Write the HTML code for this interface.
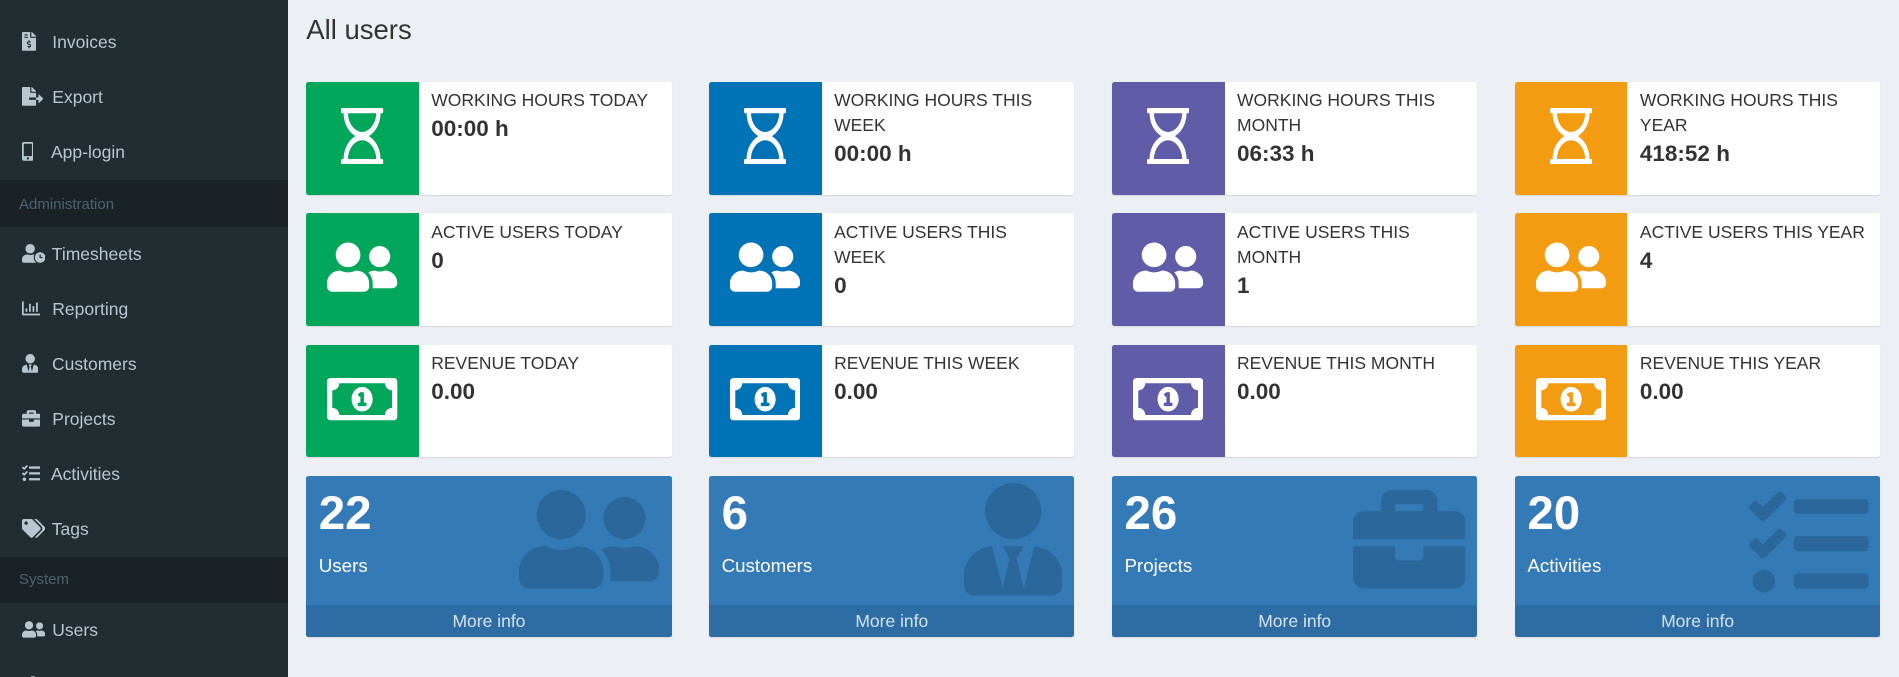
<!DOCTYPE html>
<html lang="en"><head><meta charset="utf-8"><title>All users</title>
<style>
*{box-sizing:border-box}
html,body{margin:0;padding:0;width:1899px;height:677px;overflow:hidden;background:#ecf0f5;font-family:"Liberation Sans",sans-serif;color:#333}
.side{position:absolute;left:0;top:0;width:287.5px;height:677px;background:#222d32;overflow:hidden}
.side svg{position:absolute;left:21.5px;height:18.75px;fill:#b8c7ce}
.side a{position:absolute;font-size:17.5px;line-height:25px;color:#b8c7ce;white-space:nowrap}
.hd{position:absolute;left:0;width:287.5px;background:#1a2226;color:#4b646f;font-size:15px;padding-left:19px;white-space:nowrap}
h1{position:absolute;left:306.25px;top:14.5px;margin:0;font-size:27.5px;line-height:30px;font-weight:400;color:#333}
.ib{position:absolute;width:365.4px;height:112.5px;background:#fff;border-radius:2.5px;box-shadow:0 1px 1px rgba(0,0,0,.1);overflow:hidden}
.ic{position:absolute;left:0;top:0;width:112.5px;height:112.5px}
.ic svg{position:absolute;top:26px;height:56.25px;fill:#fff}
.hg{left:35.2px;width:42.2px}.uf{left:21.1px;width:70.3px}
.ct{position:absolute;left:112.5px;top:0;right:0;padding:6.25px 12.5px}
.t{display:block;font-size:17.5px;line-height:25px;text-transform:uppercase}
.n{display:block;font-size:22.5px;line-height:32.1px;font-weight:700}
.g{background:#00a65a}.b{background:#0073b7}.p{background:#605ca8}.o{background:#f39c12}
.sb{position:absolute;top:475.75px;width:365.4px;height:161.25px;background:#337ab7;border-radius:2.5px;box-shadow:0 1px 1px rgba(0,0,0,.1);overflow:hidden;color:#fff}
.sb h3{position:absolute;left:12.5px;top:12.75px;margin:0;font-size:47.5px;line-height:50px;font-weight:700;white-space:nowrap}
.sb p{position:absolute;left:12.5px;top:77px;margin:0;font-size:18.75px;line-height:25px}
.sb svg{position:absolute;fill:rgba(0,0,0,.15)}
.ft{position:absolute;left:0;right:0;top:129.25px;height:32px;background:rgba(0,0,0,.1);padding-top:3.75px;text-align:center;font-size:17.5px;line-height:25px;color:rgba(255,255,255,.8)}
</style></head><body>
<div class="side">
<svg style="top:32px" viewBox="0 0 384 512"><path d="M377 105L279.1 7c-4.5-4.5-10.6-7-17-7H256v128h128v-6.1c0-6.3-2.5-12.4-7-16.9zm-153 31V0H24C10.7 0 0 10.7 0 24v464c0 13.3 10.7 24 24 24h336c13.3 0 24-10.7 24-24V160H248c-13.2 0-24-10.8-24-24zM64 72c0-4.42 3.58-8 8-8h80c4.42 0 8 3.58 8 8v16c0 4.42-3.58 8-8 8H72c-4.42 0-8-3.58-8-8V72zm0 80v-16c0-4.42 3.58-8 8-8h80c4.42 0 8 3.58 8 8v16c0 4.42-3.58 8-8 8H72c-4.42 0-8-3.58-8-8zm144 263.88V440c0 4.42-3.58 8-8 8h-16c-4.42 0-8-3.58-8-8v-24.29c-11.29-.58-22.27-4.52-31.37-11.35-3.9-2.93-4.1-8.77-.57-12.14l11.75-11.21c2.77-2.64 6.89-2.76 10.13-.73 3.87 2.42 8.26 3.72 12.82 3.72h28.11c6.5 0 11.8-5.92 11.8-13.19 0-5.95-3.61-11.19-8.77-12.73l-45-13.5c-18.59-5.58-31.58-23.42-31.58-43.39 0-24.52 19.05-44.44 42.67-45.07V232c0-4.42 3.58-8 8-8h16c4.42 0 8 3.58 8 8v24.29c11.29.58 22.27 4.51 31.37 11.35 3.9 2.93 4.1 8.77.57 12.14l-11.75 11.21c-2.77 2.64-6.89 2.76-10.13.73-3.87-2.43-8.26-3.72-12.82-3.72h-28.11c-6.5 0-11.8 5.92-11.8 13.19 0 5.95 3.61 11.19 8.77 12.73l45 13.5c18.59 5.58 31.58 23.42 31.58 43.39 0 24.53-19.05 44.44-42.67 45.07z"/></svg>
<a style="left:52.3px;top:29.5px">Invoices</a>
<svg style="top:87px" viewBox="0 0 576 512"><path d="M384 121.9c0-6.3-2.5-12.4-7-16.9L279.1 7c-4.5-4.5-10.6-7-17-7H256v128h128zM571 308l-95.7-96.4c-10.1-10.1-27.4-3-27.4 11.3V288h-64v64h64v65.2c0 14.3 17.3 21.4 27.4 11.3L571 332c6.6-6.6 6.6-17.4 0-24zm-379 28v-32c0-8.8 7.2-16 16-16h176V160H248c-13.2 0-24-10.8-24-24V0H24C10.7 0 0 10.7 0 24v464c0 13.3 10.7 24 24 24h336c13.3 0 24-10.7 24-24V352H208c-8.8 0-16-7.2-16-16z"/></svg>
<a style="left:52.3px;top:84.5px">Export</a>
<svg style="top:142px" viewBox="0 0 320 512"><path d="M272 0H48C21.5 0 0 21.5 0 48v416c0 26.5 21.5 48 48 48h224c26.5 0 48-21.5 48-48V48c0-26.5-21.5-48-48-48zM160 480c-17.7 0-32-14.3-32-32s14.3-32 32-32 32 14.3 32 32-14.3 32-32 32zm112-108c0 6.6-5.4 12-12 12H60c-6.6 0-12-5.4-12-12V60c0-6.6 5.4-12 12-12h200c6.6 0 12 5.4 12 12v312z"/></svg>
<a style="left:51px;top:139.5px">App-login</a>
<div class="hd" style="top:180px;height:47px;line-height:47px;padding-top:.5px">Administration</div>
<svg style="top:244px" viewBox="0 0 640 512"><path d="M496 224c-79.6 0-144 64.4-144 144s64.4 144 144 144 144-64.4 144-144-64.4-144-144-144zm64 150.3c0 5.3-4.4 9.7-9.7 9.7h-60.6c-5.3 0-9.7-4.4-9.7-9.7v-76.6c0-5.3 4.4-9.7 9.7-9.7h12.6c5.3 0 9.7 4.4 9.7 9.7V352h38.3c5.3 0 9.7 4.4 9.7 9.7v12.6zM320 368c0-27.8 6.7-54.1 18.2-77.5-8-1.5-16.2-2.5-24.6-2.5h-16.7c-22.2 10.2-46.9 16-72.9 16s-50.6-5.8-72.9-16h-16.7C60.2 288 0 348.2 0 422.4V464c0 26.5 21.5 48 48 48h347.1c-45.3-31.9-75.1-84.5-75.1-144zm-96-112c70.7 0 128-57.3 128-128S294.7 0 224 0 96 57.3 96 128s57.3 128 128 128z"/></svg>
<a style="left:51.8px;top:241.5px">Timesheets</a>
<svg style="top:298.7px" viewBox="0 0 512 512"><path d="M396.8 352h22.4c6.4 0 12.8-6.4 12.8-12.8V108.8c0-6.4-6.4-12.8-12.8-12.8h-22.4c-6.4 0-12.8 6.4-12.8 12.8v230.4c0 6.4 6.4 12.8 12.8 12.8zm-192 0h22.4c6.4 0 12.8-6.4 12.8-12.8V140.8c0-6.4-6.4-12.8-12.8-12.8h-22.4c-6.4 0-12.8 6.4-12.8 12.8v198.4c0 6.4 6.4 12.8 12.8 12.8zm96 0h22.4c6.4 0 12.8-6.4 12.8-12.8V204.8c0-6.4-6.4-12.8-12.8-12.8h-22.4c-6.4 0-12.8 6.4-12.8 12.8v134.4c0 6.4 6.4 12.8 12.8 12.8zM496 400H48V80c0-8.84-7.16-16-16-16H16C7.16 64 0 71.16 0 80v336c0 17.67 14.33 32 32 32h464c8.84 0 16-7.16 16-16v-16c0-8.84-7.16-16-16-16zm-387.2-48h22.4c6.4 0 12.8-6.4 12.8-12.8v-70.4c0-6.4-6.4-12.8-12.8-12.8h-22.4c-6.4 0-12.8 6.4-12.8 12.8v70.4c0 6.4 6.4 12.8 12.8 12.8z"/></svg>
<a style="left:52.3px;top:296.5px">Reporting</a>
<svg style="top:354px" viewBox="0 0 448 512"><path d="M224 256c70.7 0 128-57.3 128-128S294.7 0 224 0 96 57.3 96 128s57.3 128 128 128zm95.8 32.6L272 480l-32-136 32-56h-96l32 56-32 136-47.8-191.4C56.9 292 0 350.3 0 422.4V464c0 26.5 21.5 48 48 48h352c26.5 0 48-21.5 48-48v-41.6c0-72.1-56.9-130.4-128.2-133.8z"/></svg>
<a style="left:52px;top:351.5px">Customers</a>
<svg style="top:408.6px" viewBox="0 0 512 512"><path d="M320 336c0 8.84-7.16 16-16 16h-96c-8.84 0-16-7.16-16-16v-48H0v144c0 25.6 22.4 48 48 48h416c25.6 0 48-22.4 48-48V288H320v48zm144-208h-80V80c0-25.6-22.4-48-48-48H176c-25.6 0-48 22.4-48 48v48H48c-25.6 0-48 22.4-48 48v80h512v-80c0-25.6-22.4-48-48-48zm-144 0H192V96h128v32z"/></svg>
<a style="left:52.3px;top:406.5px">Projects</a>
<svg style="top:464px" viewBox="0 0 512 512"><path d="M139.61 35.5a12 12 0 0 0-17 0L58.93 98.81l-22.7-22.12a12 12 0 0 0-17 0L3.53 92.41a12 12 0 0 0 0 17l47.59 47.4a12.78 12.78 0 0 0 17.61 0l15.59-15.62L156.52 69a12.09 12.09 0 0 0 .09-17zm0 159.19a12 12 0 0 0-17 0l-63.68 63.72-22.7-22.1a12 12 0 0 0-17 0L3.53 252a12 12 0 0 0 0 17L51 316.5a12.77 12.77 0 0 0 17.6 0l15.7-15.69 72.2-72.22a12 12 0 0 0 .09-16.9zM64 368c-26.49 0-48.59 21.5-48.59 48S37.53 464 64 464a48 48 0 0 0 0-96zm432 16H208a16 16 0 0 0-16 16v32a16 16 0 0 0 16 16h288a16 16 0 0 0 16-16v-32a16 16 0 0 0-16-16zm0-320H208a16 16 0 0 0-16 16v32a16 16 0 0 0 16 16h288a16 16 0 0 0 16-16V80a16 16 0 0 0-16-16zm0 160H208a16 16 0 0 0-16 16v32a16 16 0 0 0 16 16h288a16 16 0 0 0 16-16v-32a16 16 0 0 0-16-16z"/></svg>
<a style="left:51px;top:461.5px">Activities</a>
<svg style="top:519px" viewBox="0 0 640 512"><path d="M497.941 225.941L286.059 14.059A48 48 0 0 0 252.118 0H48C21.49 0 0 21.49 0 48v204.118a48 48 0 0 0 14.059 33.941l211.882 211.882c18.744 18.745 49.136 18.746 67.882 0l204.118-204.118c18.745-18.745 18.745-49.137 0-67.882zM112 160c-26.51 0-48-21.49-48-48s21.49-48 48-48 48 21.49 48 48-21.49 48-48 48zm513.941 133.823L421.823 497.941c-18.745 18.745-49.137 18.745-67.882 0l-.36-.36L527.64 323.522c16.999-16.999 26.36-39.6 26.36-63.64s-9.362-46.641-26.36-63.64L331.397 0h48.721a48 48 0 0 1 33.941 14.059l211.882 211.882c18.745 18.745 18.745 49.137 0 67.882z"/></svg>
<a style="left:51.8px;top:516.5px">Tags</a>
<div class="hd" style="top:557px;height:46px;line-height:46px">System</div>
<svg style="top:620px" viewBox="0 0 640 512"><path d="M192 256c61.9 0 112-50.1 112-112S253.9 32 192 32 80 82.1 80 144s50.1 112 112 112zm76.8 32h-8.3c-20.8 10-43.9 16-68.5 16s-47.6-6-68.5-16h-8.3C51.6 288 0 339.6 0 403.2V432c0 26.5 21.5 48 48 48h288c26.5 0 48-21.5 48-48v-28.8c0-63.6-51.6-115.2-115.2-115.2zM480 256c53 0 96-43 96-96s-43-96-96-96-96 43-96 96 43 96 96 96zm48 32h-3.8c-13.9 4.8-28.6 8-44.2 8s-30.3-3.2-44.2-8H432c-20.4 0-39.2 5.9-55.7 15.4 24.4 26.3 39.7 61.2 39.7 99.8v38.4c0 2.2-.5 4.3-.6 6.4H592c26.5 0 48-21.5 48-48 0-61.9-50.1-112-112-112z"/></svg>
<a style="left:52.3px;top:617.5px">Users</a>
<div style="position:absolute;left:31px;top:676px;width:4px;height:1px;background:#8a979d"></div>
</div>
<h1>All users</h1>

<!-- row 1 -->
<div class="ib" style="left:306.25px;top:82px"><div class="ic g"><svg class="hg" viewBox="0 0 384 512"><path fill-rule="evenodd" d="M372 0H12C5.4 0 0 5.4 0 12v24c0 6.6 5.4 12 12 12h12c0 80 36 165 106 208C60 299 24 384 24 464H12c-6.6 0-12 5.4-12 12v24c0 6.6 5.4 12 12 12h360c6.6 0 12-5.4 12-12v-24c0-6.6-5.4-12-12-12h-12c0-80-36-165-106-208 70-43 106-128 106-208h12c6.6 0 12-5.4 12-12V12c0-6.6-5.4-12-12-12zM64 48h256c0 90-60 170-128 170S64 138 64 48zm256 416H64c0-90 60-170 128-170s128 80 128 170z"/></svg></div><div class="ct"><span class="t">Working hours today</span><span class="n">00:00 h</span></div></div>
<div class="ib" style="left:709.1px;top:82px"><div class="ic b"><svg class="hg" viewBox="0 0 384 512"><path fill-rule="evenodd" d="M372 0H12C5.4 0 0 5.4 0 12v24c0 6.6 5.4 12 12 12h12c0 80 36 165 106 208C60 299 24 384 24 464H12c-6.6 0-12 5.4-12 12v24c0 6.6 5.4 12 12 12h360c6.6 0 12-5.4 12-12v-24c0-6.6-5.4-12-12-12h-12c0-80-36-165-106-208 70-43 106-128 106-208h12c6.6 0 12-5.4 12-12V12c0-6.6-5.4-12-12-12zM64 48h256c0 90-60 170-128 170S64 138 64 48zm256 416H64c0-90 60-170 128-170s128 80 128 170z"/></svg></div><div class="ct"><span class="t">Working hours this week</span><span class="n">00:00 h</span></div></div>
<div class="ib" style="left:1112px;top:82px"><div class="ic p"><svg class="hg" viewBox="0 0 384 512"><path fill-rule="evenodd" d="M372 0H12C5.4 0 0 5.4 0 12v24c0 6.6 5.4 12 12 12h12c0 80 36 165 106 208C60 299 24 384 24 464H12c-6.6 0-12 5.4-12 12v24c0 6.6 5.4 12 12 12h360c6.6 0 12-5.4 12-12v-24c0-6.6-5.4-12-12-12h-12c0-80-36-165-106-208 70-43 106-128 106-208h12c6.6 0 12-5.4 12-12V12c0-6.6-5.4-12-12-12zM64 48h256c0 90-60 170-128 170S64 138 64 48zm256 416H64c0-90 60-170 128-170s128 80 128 170z"/></svg></div><div class="ct"><span class="t">Working hours this month</span><span class="n">06:33 h</span></div></div>
<div class="ib" style="left:1514.9px;top:82px"><div class="ic o"><svg class="hg" viewBox="0 0 384 512"><path fill-rule="evenodd" d="M372 0H12C5.4 0 0 5.4 0 12v24c0 6.6 5.4 12 12 12h12c0 80 36 165 106 208C60 299 24 384 24 464H12c-6.6 0-12 5.4-12 12v24c0 6.6 5.4 12 12 12h360c6.6 0 12-5.4 12-12v-24c0-6.6-5.4-12-12-12h-12c0-80-36-165-106-208 70-43 106-128 106-208h12c6.6 0 12-5.4 12-12V12c0-6.6-5.4-12-12-12zM64 48h256c0 90-60 170-128 170S64 138 64 48zm256 416H64c0-90 60-170 128-170s128 80 128 170z"/></svg></div><div class="ct"><span class="t">Working hours this year</span><span class="n">418:52 h</span></div></div>

<!-- row 2 -->
<div class="ib" style="left:306.25px;top:213.25px"><div class="ic g"><svg class="uf" viewBox="0 0 640 512"><path d="M192 256c61.9 0 112-50.1 112-112S253.9 32 192 32 80 82.1 80 144s50.1 112 112 112zm76.8 32h-8.3c-20.8 10-43.9 16-68.5 16s-47.6-6-68.5-16h-8.3C51.6 288 0 339.6 0 403.2V432c0 26.5 21.5 48 48 48h288c26.5 0 48-21.5 48-48v-28.8c0-63.6-51.6-115.2-115.2-115.2zM480 256c53 0 96-43 96-96s-43-96-96-96-96 43-96 96 43 96 96 96zm48 32h-3.8c-13.9 4.8-28.6 8-44.2 8s-30.3-3.2-44.2-8H432c-20.4 0-39.2 5.9-55.7 15.4 24.4 26.3 39.7 61.2 39.7 99.8v38.4c0 2.2-.5 4.3-.6 6.4H592c26.5 0 48-21.5 48-48 0-61.9-50.1-112-112-112z"/></svg></div><div class="ct"><span class="t">Active users today</span><span class="n">0</span></div></div>
<div class="ib" style="left:709.1px;top:213.25px"><div class="ic b"><svg class="uf" viewBox="0 0 640 512"><path d="M192 256c61.9 0 112-50.1 112-112S253.9 32 192 32 80 82.1 80 144s50.1 112 112 112zm76.8 32h-8.3c-20.8 10-43.9 16-68.5 16s-47.6-6-68.5-16h-8.3C51.6 288 0 339.6 0 403.2V432c0 26.5 21.5 48 48 48h288c26.5 0 48-21.5 48-48v-28.8c0-63.6-51.6-115.2-115.2-115.2zM480 256c53 0 96-43 96-96s-43-96-96-96-96 43-96 96 43 96 96 96zm48 32h-3.8c-13.9 4.8-28.6 8-44.2 8s-30.3-3.2-44.2-8H432c-20.4 0-39.2 5.9-55.7 15.4 24.4 26.3 39.7 61.2 39.7 99.8v38.4c0 2.2-.5 4.3-.6 6.4H592c26.5 0 48-21.5 48-48 0-61.9-50.1-112-112-112z"/></svg></div><div class="ct"><span class="t">Active users this week</span><span class="n">0</span></div></div>
<div class="ib" style="left:1112px;top:213.25px"><div class="ic p"><svg class="uf" viewBox="0 0 640 512"><path d="M192 256c61.9 0 112-50.1 112-112S253.9 32 192 32 80 82.1 80 144s50.1 112 112 112zm76.8 32h-8.3c-20.8 10-43.9 16-68.5 16s-47.6-6-68.5-16h-8.3C51.6 288 0 339.6 0 403.2V432c0 26.5 21.5 48 48 48h288c26.5 0 48-21.5 48-48v-28.8c0-63.6-51.6-115.2-115.2-115.2zM480 256c53 0 96-43 96-96s-43-96-96-96-96 43-96 96 43 96 96 96zm48 32h-3.8c-13.9 4.8-28.6 8-44.2 8s-30.3-3.2-44.2-8H432c-20.4 0-39.2 5.9-55.7 15.4 24.4 26.3 39.7 61.2 39.7 99.8v38.4c0 2.2-.5 4.3-.6 6.4H592c26.5 0 48-21.5 48-48 0-61.9-50.1-112-112-112z"/></svg></div><div class="ct"><span class="t">Active users this month</span><span class="n">1</span></div></div>
<div class="ib" style="left:1514.9px;top:213.25px"><div class="ic o"><svg class="uf" viewBox="0 0 640 512"><path d="M192 256c61.9 0 112-50.1 112-112S253.9 32 192 32 80 82.1 80 144s50.1 112 112 112zm76.8 32h-8.3c-20.8 10-43.9 16-68.5 16s-47.6-6-68.5-16h-8.3C51.6 288 0 339.6 0 403.2V432c0 26.5 21.5 48 48 48h288c26.5 0 48-21.5 48-48v-28.8c0-63.6-51.6-115.2-115.2-115.2zM480 256c53 0 96-43 96-96s-43-96-96-96-96 43-96 96 43 96 96 96zm48 32h-3.8c-13.9 4.8-28.6 8-44.2 8s-30.3-3.2-44.2-8H432c-20.4 0-39.2 5.9-55.7 15.4 24.4 26.3 39.7 61.2 39.7 99.8v38.4c0 2.2-.5 4.3-.6 6.4H592c26.5 0 48-21.5 48-48 0-61.9-50.1-112-112-112z"/></svg></div><div class="ct"><span class="t">Active users this year</span><span class="n">4</span></div></div>

<!-- row 3 -->
<div class="ib" style="left:306.25px;top:344.5px"><div class="ic g"><svg class="uf" viewBox="0 0 640 512"><path d="M320 144c-53.02 0-96 50.14-96 112 0 61.85 42.98 112 96 112 53 0 96-50.13 96-112 0-61.86-42.98-112-96-112zm40 168c0 4.42-3.58 8-8 8h-64c-4.42 0-8-3.58-8-8v-16c0-4.42 3.58-8 8-8h16v-55.44l-.47.31a7.992 7.992 0 0 1-11.09-2.22l-8.88-13.31a7.992 7.992 0 0 1 2.22-11.09l15.33-10.22a23.99 23.99 0 0 1 13.31-4.03H328c4.42 0 8 3.58 8 8v88h16c4.42 0 8 3.58 8 8v16zM608 64H32C14.33 64 0 78.33 0 96v320c0 17.67 14.33 32 32 32h576c17.67 0 32-14.33 32-32V96c0-17.67-14.33-32-32-32zm-16 272c-35.35 0-64 28.65-64 64H112c0-35.35-28.65-64-64-64V176c35.35 0 64-28.65 64-64h416c0 35.35 28.65 64 64 64v160z"/></svg></div><div class="ct"><span class="t">Revenue today</span><span class="n">0.00</span></div></div>
<div class="ib" style="left:709.1px;top:344.5px"><div class="ic b"><svg class="uf" viewBox="0 0 640 512"><path d="M320 144c-53.02 0-96 50.14-96 112 0 61.85 42.98 112 96 112 53 0 96-50.13 96-112 0-61.86-42.98-112-96-112zm40 168c0 4.42-3.58 8-8 8h-64c-4.42 0-8-3.58-8-8v-16c0-4.42 3.58-8 8-8h16v-55.44l-.47.31a7.992 7.992 0 0 1-11.09-2.22l-8.88-13.31a7.992 7.992 0 0 1 2.22-11.09l15.33-10.22a23.99 23.99 0 0 1 13.31-4.03H328c4.42 0 8 3.58 8 8v88h16c4.42 0 8 3.58 8 8v16zM608 64H32C14.33 64 0 78.33 0 96v320c0 17.67 14.33 32 32 32h576c17.67 0 32-14.33 32-32V96c0-17.67-14.33-32-32-32zm-16 272c-35.35 0-64 28.65-64 64H112c0-35.35-28.65-64-64-64V176c35.35 0 64-28.65 64-64h416c0 35.35 28.65 64 64 64v160z"/></svg></div><div class="ct"><span class="t">Revenue this week</span><span class="n">0.00</span></div></div>
<div class="ib" style="left:1112px;top:344.5px"><div class="ic p"><svg class="uf" viewBox="0 0 640 512"><path d="M320 144c-53.02 0-96 50.14-96 112 0 61.85 42.98 112 96 112 53 0 96-50.13 96-112 0-61.86-42.98-112-96-112zm40 168c0 4.42-3.58 8-8 8h-64c-4.42 0-8-3.58-8-8v-16c0-4.42 3.58-8 8-8h16v-55.44l-.47.31a7.992 7.992 0 0 1-11.09-2.22l-8.88-13.31a7.992 7.992 0 0 1 2.22-11.09l15.33-10.22a23.99 23.99 0 0 1 13.31-4.03H328c4.42 0 8 3.58 8 8v88h16c4.42 0 8 3.58 8 8v16zM608 64H32C14.33 64 0 78.33 0 96v320c0 17.67 14.33 32 32 32h576c17.67 0 32-14.33 32-32V96c0-17.67-14.33-32-32-32zm-16 272c-35.35 0-64 28.65-64 64H112c0-35.35-28.65-64-64-64V176c35.35 0 64-28.65 64-64h416c0 35.35 28.65 64 64 64v160z"/></svg></div><div class="ct"><span class="t">Revenue this month</span><span class="n">0.00</span></div></div>
<div class="ib" style="left:1514.9px;top:344.5px"><div class="ic o"><svg class="uf" viewBox="0 0 640 512"><path d="M320 144c-53.02 0-96 50.14-96 112 0 61.85 42.98 112 96 112 53 0 96-50.13 96-112 0-61.86-42.98-112-96-112zm40 168c0 4.42-3.58 8-8 8h-64c-4.42 0-8-3.58-8-8v-16c0-4.42 3.58-8 8-8h16v-55.44l-.47.31a7.992 7.992 0 0 1-11.09-2.22l-8.88-13.31a7.992 7.992 0 0 1 2.22-11.09l15.33-10.22a23.99 23.99 0 0 1 13.31-4.03H328c4.42 0 8 3.58 8 8v88h16c4.42 0 8 3.58 8 8v16zM608 64H32C14.33 64 0 78.33 0 96v320c0 17.67 14.33 32 32 32h576c17.67 0 32-14.33 32-32V96c0-17.67-14.33-32-32-32zm-16 272c-35.35 0-64 28.65-64 64H112c0-35.35-28.65-64-64-64V176c35.35 0 64-28.65 64-64h416c0 35.35 28.65 64 64 64v160z"/></svg></div><div class="ct"><span class="t">Revenue this year</span><span class="n">0.00</span></div></div>

<!-- row 4 -->
<div class="sb" style="left:306.25px"><h3>22</h3><p>Users</p>
<svg style="right:12.5px;top:7.25px;width:140.6px;height:112.5px" viewBox="0 0 640 512"><path d="M192 256c61.9 0 112-50.1 112-112S253.9 32 192 32 80 82.1 80 144s50.1 112 112 112zm76.8 32h-8.3c-20.8 10-43.9 16-68.5 16s-47.6-6-68.5-16h-8.3C51.6 288 0 339.6 0 403.2V432c0 26.5 21.5 48 48 48h288c26.5 0 48-21.5 48-48v-28.8c0-63.6-51.6-115.2-115.2-115.2zM480 256c53 0 96-43 96-96s-43-96-96-96-96 43-96 96 43 96 96 96zm48 32h-3.8c-13.9 4.8-28.6 8-44.2 8s-30.3-3.2-44.2-8H432c-20.4 0-39.2 5.9-55.7 15.4 24.4 26.3 39.7 61.2 39.7 99.8v38.4c0 2.2-.5 4.3-.6 6.4H592c26.5 0 48-21.5 48-48 0-61.9-50.1-112-112-112z"/></svg>
<div class="ft">More info</div></div>
<div class="sb" style="left:709.1px"><h3>6</h3><p>Customers</p>
<svg style="right:12.5px;top:7.25px;width:98.4px;height:112.5px" viewBox="0 0 448 512"><path d="M224 256c70.7 0 128-57.3 128-128S294.7 0 224 0 96 57.3 96 128s57.3 128 128 128zm95.8 32.6L272 480l-32-136 32-56h-96l32 56-32 136-47.8-191.4C56.9 292 0 350.3 0 422.4V464c0 26.5 21.5 48 48 48h352c26.5 0 48-21.5 48-48v-41.6c0-72.1-56.9-130.4-128.2-133.8z"/></svg>
<div class="ft">More info</div></div>
<div class="sb" style="left:1112px"><h3>26</h3><p>Projects</p>
<svg style="right:12px;top:7.25px;width:112.5px;height:112.5px" viewBox="0 0 512 512"><path d="M320 336c0 8.84-7.16 16-16 16h-96c-8.84 0-16-7.16-16-16v-48H0v144c0 25.6 22.4 48 48 48h416c25.6 0 48-22.4 48-48V288H320v48zm144-208h-80V80c0-25.6-22.4-48-48-48H176c-25.6 0-48 22.4-48 48v48H48c-25.6 0-48 22.4-48 48v80h512v-80c0-25.6-22.4-48-48-48zm-144 0H192V96h128v32z"/></svg>
<div class="ft">More info</div></div>
<div class="sb" style="left:1514.9px"><h3>20</h3><p>Activities</p>
<svg style="right:11.3px;top:8.25px;width:119.5px;height:119.5px" viewBox="0 0 512 512"><path d="M139.61 35.5a12 12 0 0 0-17 0L58.93 98.81l-22.7-22.12a12 12 0 0 0-17 0L3.53 92.41a12 12 0 0 0 0 17l47.59 47.4a12.78 12.78 0 0 0 17.61 0l15.59-15.62L156.52 69a12.09 12.09 0 0 0 .09-17zm0 159.19a12 12 0 0 0-17 0l-63.68 63.72-22.7-22.1a12 12 0 0 0-17 0L3.53 252a12 12 0 0 0 0 17L51 316.5a12.77 12.77 0 0 0 17.6 0l15.7-15.69 72.2-72.22a12 12 0 0 0 .09-16.9zM64 368c-26.49 0-48.59 21.5-48.59 48S37.53 464 64 464a48 48 0 0 0 0-96zm432 16H208a16 16 0 0 0-16 16v32a16 16 0 0 0 16 16h288a16 16 0 0 0 16-16v-32a16 16 0 0 0-16-16zm0-320H208a16 16 0 0 0-16 16v32a16 16 0 0 0 16 16h288a16 16 0 0 0 16-16V80a16 16 0 0 0-16-16zm0 160H208a16 16 0 0 0-16 16v32a16 16 0 0 0 16 16h288a16 16 0 0 0 16-16v-32a16 16 0 0 0-16-16z"/></svg>
<div class="ft">More info</div></div>
</body></html>
